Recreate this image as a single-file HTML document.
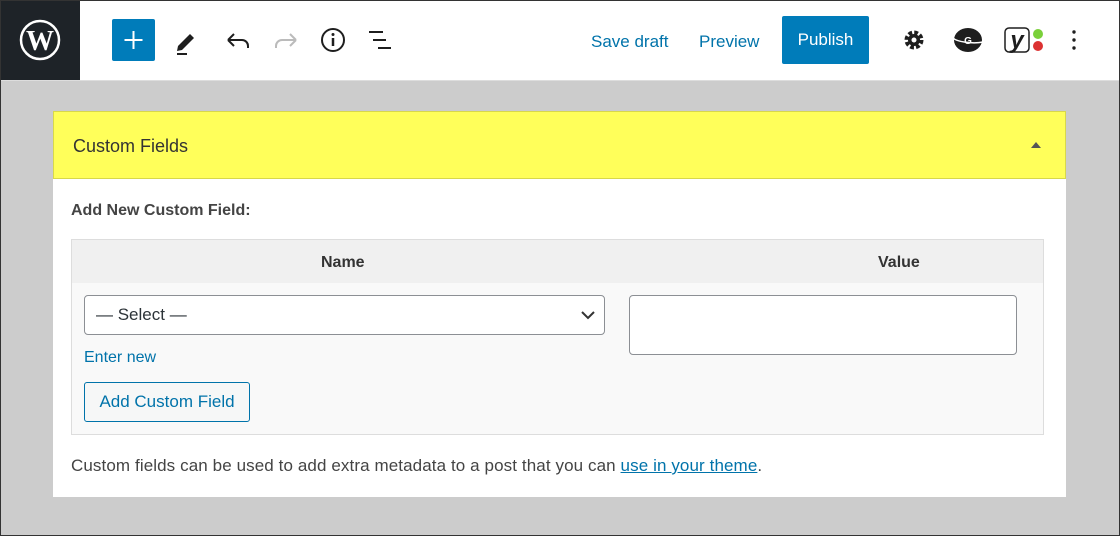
<!DOCTYPE html>
<html><head><meta charset="utf-8"><style>
*{box-sizing:border-box;margin:0;padding:0}
body{width:1120px;height:536px;background:#ccc;font-family:"Liberation Sans",sans-serif;position:relative;overflow:hidden}
.frame{position:absolute;left:0;top:0;width:1120px;height:536px;border:1px solid #333;z-index:9;pointer-events:none}
.hdr{position:absolute;left:0;top:0;width:1120px;height:81px;background:#fff;border-bottom:1px solid #ddd}
.logo{position:absolute;left:0;top:0;width:80px;height:80px;background:#1e2328}
.abs{position:absolute}
.blue{color:#0073aa;font-size:17px}
.panel{position:absolute;left:53px;top:111px;width:1013px;height:386px;background:#fff}
.ph{position:absolute;left:0;top:0;width:1013px;height:68px;background:#ffff5a;border:1px solid #d8d84a}
.tbl{position:absolute;left:18px;top:128px;width:973px;height:196px;background:#f9f9f9;border:1px solid #ddd}
</style></head><body>
<div class="frame"></div>
<div class="hdr">
 <div class="logo"><svg width="80" height="80" viewBox="0 0 80 80"><circle cx="40" cy="40" r="19" fill="none" stroke="#fff" stroke-width="2.5"/><text x="40" y="50" text-anchor="middle" fill="#fff" font-family="Liberation Serif" font-weight="bold" font-size="28">W</text></svg></div>
 <div class="abs" style="left:112px;top:19px;width:43px;height:42px;background:#007cba;border-radius:2px"><svg width="43" height="42"><path d="M21.5 12v18M12.5 21h18" stroke="#fff" stroke-width="2"/></svg></div>
 <svg class="abs" style="left:170px;top:20px" width="40" height="40"><path d="M8 26l12-12 4 4-12 12-5 1z" fill="#1e1e1e"/><path d="M7 34h10" stroke="#1e1e1e" stroke-width="2"/></svg>
 <svg class="abs" style="left:220px;top:20px" width="40" height="40"><path d="M8 20l6-6M8 20l6 6M8 20h14a6 6 0 0 1 6 6v2" fill="none" stroke="#1e1e1e" stroke-width="2"/></svg>
 <svg class="abs" style="left:268px;top:20px" width="40" height="40"><path d="M28 20l-6-6M28 20l-6 6M28 20H14a6 6 0 0 0-6 6v2" fill="none" stroke="#bbb" stroke-width="2"/></svg>
 <svg class="abs" style="left:313px;top:20px" width="40" height="40"><circle cx="20" cy="20" r="11" fill="none" stroke="#1e1e1e" stroke-width="2"/><path d="M20 18v8" stroke="#1e1e1e" stroke-width="2.5"/><circle cx="20" cy="14.5" r="1.5" fill="#1e1e1e"/></svg>
 <svg class="abs" style="left:360px;top:20px" width="40" height="40"><path d="M9 12h14M13 20h13M18 28h13" stroke="#1e1e1e" stroke-width="2"/></svg>
 <div class="abs blue" style="left:591px;top:32px">Save draft</div>
 <div class="abs blue" style="left:699px;top:32px">Preview</div>
 <div class="abs" style="left:782px;top:16px;width:87px;height:48px;background:#007cba;border-radius:2px;color:#fff;font-size:17px;text-align:center;line-height:48px">Publish</div>
 <svg class="abs" style="left:900px;top:26px" width="28" height="28"><circle cx="14" cy="14" r="7" fill="none" stroke="#1e1e1e" stroke-width="5" stroke-dasharray="3.5 2"/><circle cx="14" cy="14" r="6" fill="#1e1e1e"/><circle cx="14" cy="14" r="2.5" fill="#fff"/></svg>
 <svg class="abs" style="left:950px;top:24px" width="36" height="34"><ellipse cx="18" cy="16" rx="14" ry="12" fill="#1e1e1e"/><path d="M3 14c4 4 20 6 30 4" stroke="#fff" stroke-width="1.5" fill="none"/><text x="18" y="20" text-anchor="middle" fill="#fff" font-size="10" font-weight="bold">G</text></svg>
 <svg class="abs" style="left:1003px;top:24px" width="44" height="32"><rect x="2" y="4" width="24" height="24" rx="4" fill="none" stroke="#1e1e1e" stroke-width="1.5"/><text x="14" y="24" text-anchor="middle" font-size="24" font-weight="bold" font-style="italic" fill="#1e1e1e">y</text><circle cx="35" cy="10" r="5" fill="#7ad03a"/><circle cx="35" cy="22" r="5" fill="#dc3232"/></svg>
 <svg class="abs" style="left:1066px;top:28px" width="16" height="24"><circle cx="8" cy="4" r="1.7" fill="#1e1e1e"/><circle cx="8" cy="12" r="1.7" fill="#1e1e1e"/><circle cx="8" cy="20" r="1.7" fill="#1e1e1e"/></svg>
</div>
<div class="panel">
 <div class="ph"><div class="abs" style="left:19px;top:24px;font-size:18px;color:#333">Custom Fields</div>
 <svg class="abs" style="left:976px;top:28px" width="12" height="10"><path d="M1 8l5-6 5 6z" fill="#555"/></svg></div>
 <div class="abs" style="left:18px;top:91px;font-size:16px;font-weight:bold;color:#444">Add New Custom Field:</div>
 <div class="tbl">
  <div class="abs" style="left:0;top:0;width:971px;height:43px;background:#f0f0f0"></div>
  <div class="abs" style="left:249px;top:14px;font-size:16px;font-weight:bold;color:#333">Name</div>
  <div class="abs" style="left:806px;top:14px;font-size:16px;font-weight:bold;color:#333">Value</div>
  <div class="abs" style="left:12px;top:55px;width:521px;height:40px;background:#fff;border:1px solid #8c8f94;border-radius:4px;font-size:17px;color:#2c3338;padding:9px 11px">— Select —
   <svg class="abs" style="right:8px;top:12px" width="16" height="14"><path d="M2 4l6 6 6-6" fill="none" stroke="#333" stroke-width="2"/></svg></div>
  <div class="abs" style="left:557px;top:55px;width:388px;height:60px;background:#fff;border:1px solid #8c8f94;border-radius:4px"></div>
  <div class="abs" style="left:12px;top:109px;font-size:16px;color:#0073aa">Enter new</div>
  <div class="abs" style="left:12px;top:142px;width:166px;height:40px;border:1px solid #0073aa;border-radius:3px;background:#f6f7f7;color:#0073aa;font-size:17px;text-align:center;line-height:38px">Add Custom Field</div>
 </div>
 <div class="abs" style="left:18px;top:345px;font-size:17px;color:#444;letter-spacing:0.1px">Custom fields can be used to add extra metadata to a post that you can <span style="color:#0073aa;text-decoration:underline">use in your theme</span>.</div>
</div>
</body></html>
